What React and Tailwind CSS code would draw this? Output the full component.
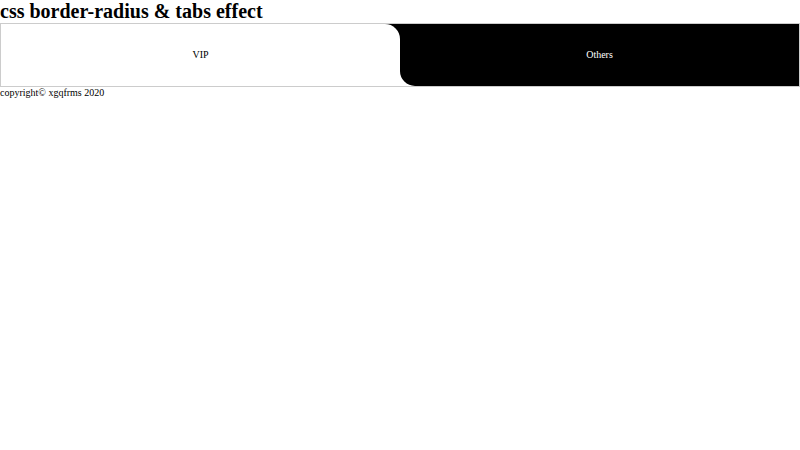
import React from "react";

const tabs = [
  { id: "vip", label: "VIP" },
  { id: "others", label: "Others" },
];

const App = () => {
  return (
    <div className="min-h-[450px] bg-white text-black font-['Liberation_Serif',serif]">
      <h1 className="m-0 text-[20px] leading-[23px] font-bold">
        css border-radius &amp; tabs effect
      </h1>

      {/* tabs: each tab sits on the other tab's colour so the corners curve into it */}
      <div className="flex h-[64px] border border-[#cccccc]">
        <div className="flex-1 bg-black">
          <div className="h-full flex items-center justify-center bg-white rounded-tr-[15px] text-[10px] pb-[1px]">
            {tabs[0].label}
          </div>
        </div>
        <div className="flex-1 bg-white">
          <div className="h-full flex items-center justify-center bg-black text-white rounded-bl-[15px] text-[10px] pb-[1px]">
            {tabs[1].label}
          </div>
        </div>
      </div>

      <footer className="text-[10px] leading-[12px]">copyright© xgqfrms 2020</footer>
    </div>
  );
};

export default App;
